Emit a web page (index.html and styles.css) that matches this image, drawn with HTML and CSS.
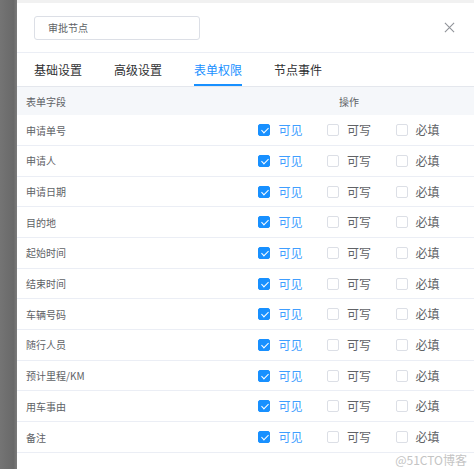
FILE: index.html
```html
<!DOCTYPE html>
<html lang="zh">
<head>
<meta charset="utf-8">
<title>审批节点</title>
<link rel="stylesheet" href="styles.css">
</head>
<body>
<div class="page">
  <div class="mask"></div>
  <div class="panel">
    <div class="header">
      <div class="name-input">审批节点</div>
      <svg class="close" viewBox="0 0 12 12" width="11" height="11"><path d="M1 1L11 11M11 1L1 11" stroke="#909399" stroke-width="1.2" fill="none"/></svg>
    </div>
    <div class="tabs">
      <div class="tab">基础设置</div>
      <div class="tab">高级设置</div>
      <div class="tab active">表单权限</div>
      <div class="tab">节点事件</div>
    </div>
    <div class="table">
      <div class="row head">
        <div class="cell-name">表单字段</div>
        <div class="cell-op">操作</div>
      </div>
      <div class="row"><div class="cell-name">申请单号</div><div class="cell-op"><span class="opt on"><i class="box"></i>可见</span><span class="opt"><i class="box"></i>可写</span><span class="opt"><i class="box"></i>必填</span></div></div>
      <div class="row"><div class="cell-name">申请人</div><div class="cell-op"><span class="opt on"><i class="box"></i>可见</span><span class="opt"><i class="box"></i>可写</span><span class="opt"><i class="box"></i>必填</span></div></div>
      <div class="row"><div class="cell-name">申请日期</div><div class="cell-op"><span class="opt on"><i class="box"></i>可见</span><span class="opt"><i class="box"></i>可写</span><span class="opt"><i class="box"></i>必填</span></div></div>
      <div class="row"><div class="cell-name">目的地</div><div class="cell-op"><span class="opt on"><i class="box"></i>可见</span><span class="opt"><i class="box"></i>可写</span><span class="opt"><i class="box"></i>必填</span></div></div>
      <div class="row"><div class="cell-name">起始时间</div><div class="cell-op"><span class="opt on"><i class="box"></i>可见</span><span class="opt"><i class="box"></i>可写</span><span class="opt"><i class="box"></i>必填</span></div></div>
      <div class="row"><div class="cell-name">结束时间</div><div class="cell-op"><span class="opt on"><i class="box"></i>可见</span><span class="opt"><i class="box"></i>可写</span><span class="opt"><i class="box"></i>必填</span></div></div>
      <div class="row"><div class="cell-name">车辆号码</div><div class="cell-op"><span class="opt on"><i class="box"></i>可见</span><span class="opt"><i class="box"></i>可写</span><span class="opt"><i class="box"></i>必填</span></div></div>
      <div class="row"><div class="cell-name">随行人员</div><div class="cell-op"><span class="opt on"><i class="box"></i>可见</span><span class="opt"><i class="box"></i>可写</span><span class="opt"><i class="box"></i>必填</span></div></div>
      <div class="row"><div class="cell-name">预计里程/KM</div><div class="cell-op"><span class="opt on"><i class="box"></i>可见</span><span class="opt"><i class="box"></i>可写</span><span class="opt"><i class="box"></i>必填</span></div></div>
      <div class="row"><div class="cell-name">用车事由</div><div class="cell-op"><span class="opt on"><i class="box"></i>可见</span><span class="opt"><i class="box"></i>可写</span><span class="opt"><i class="box"></i>必填</span></div></div>
      <div class="row"><div class="cell-name">备注</div><div class="cell-op"><span class="opt on"><i class="box"></i>可见</span><span class="opt"><i class="box"></i>可写</span><span class="opt"><i class="box"></i>必填</span></div></div>
    </div>
    <div class="watermark">@51CTO博客</div>
  </div>
</div>
</body>
</html>
```

FILE: styles.css
```css
html, body {
  margin: 0;
  padding: 0;
  background: #fff;
}
body {
  font-family: "Noto Sans CJK SC", "Noto Sans", "Liberation Sans", sans-serif;
  color: #606266;
}
.page {
  display: flex;
  width: 474px;
  height: 469px;
  overflow: hidden;
}
.mask {
  width: 17px;
  flex: none;
  background: linear-gradient(to right, #747474 0%, #696969 80%, #7c7c7c 100%);
}
.panel {
  flex: 1;
  position: relative;
  background: #fff;
  border-top: 3px solid #f1f1f1;
  display: flex;
  flex-direction: column;
}
.header {
  height: 49px;
  border-bottom: 1px solid #ebeef5;
  display: flex;
  align-items: center;
  justify-content: space-between;
  padding: 0 19px 0 17px;
}
.name-input {
  box-sizing: border-box;
  width: 166px;
  height: 24px;
  border: 1px solid #dcdfe6;
  border-radius: 3px;
  font-size: 10px;
  line-height: 22px;
  padding-left: 13px;
  color: #606266;
}
.close {
  display: block;
}
.tabs {
  height: 33px;
  border-bottom: 1px solid #e4e7ed;
  display: flex;
  gap: 32px;
  padding-left: 17px;
}
.tab {
  box-sizing: border-box;
  height: 33px;
  line-height: 33px;
  font-size: 12px;
  color: #303133;
  width: 48px;
  white-space: nowrap;
}
.tab.active {
  color: #1890ff;
  border-bottom: 2px solid #1890ff;
  line-height: 33px;
}
.table {
  display: flex;
  flex-direction: column;
}
.row {
  box-sizing: border-box;
  height: 30.7px;
  border-bottom: 1px solid #ebeef5;
  display: grid;
  grid-template-columns: 209px 1fr;
  align-items: center;
  font-size: 10px;
}
.row.head {
  height: 28.3px;
  background: #f5f7fa;
  border-bottom: none;
}
.cell-name {
  padding-left: 9px;
  color: #606266;
}
.cell-op {
  display: flex;
  justify-content: center;
  align-items: center;
  gap: 24.5px;
  padding-right: 2px;
}
.opt {
  display: flex;
  align-items: center;
  gap: 8px;
  font-size: 12px;
  line-height: 14px;
  color: #606266;
}
.box {
  box-sizing: border-box;
  width: 12px;
  height: 12px;
  border: 1px solid #dcdfe6;
  border-radius: 2px;
  background: #fff;
  position: relative;
  display: block;
}
.opt.on {
  color: #409eff;
}
.opt.on .box {
  background: #1890ff;
  border-color: #1890ff;
}
.opt.on .box::after {
  content: "";
  position: absolute;
  left: 3.5px;
  top: 1px;
  width: 3px;
  height: 6px;
  border: solid #fff;
  border-width: 0 1.3px 1.3px 0;
  transform: rotate(45deg);
}
.watermark {
  position: absolute;
  right: 7px;
  bottom: 1px;
  font-size: 12px;
  color: #c4c4c4;
  text-shadow: 0 0 1px #fff;
}
```
